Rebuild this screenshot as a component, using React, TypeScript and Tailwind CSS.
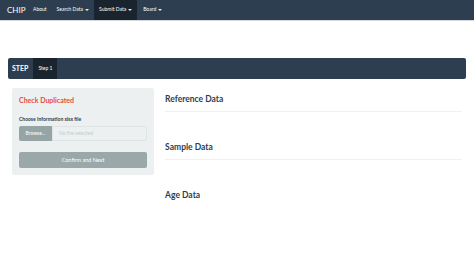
import React from 'react';

const Caret = () => (
  <span className="inline-block ml-[2px] align-middle border-t-[2px] border-x-[2px] border-x-transparent border-t-white/90 w-0 h-0" />
);

export default function App() {
  const sections = ['Reference Data', 'Sample Data', 'Age Data'];

  return (
    <div className="w-[474px] h-[270px] bg-white overflow-hidden" style={{ fontFamily: 'Lato, "Open Sans", sans-serif' }}>
      {/* top navbar */}
      <nav className="h-[21px] bg-[#2c3e50] flex items-stretch text-white border-b border-[#d5d9dc]">
        <div className="pl-[7px] pr-[5px] w-[28px] flex items-center text-[8px] leading-none">CHIP</div>
        <div className="px-[5px] flex items-center text-[5px]">About</div>
        <div className="px-[5px] flex items-center text-[5px]">Search Data<Caret /></div>
        <div className="px-[5px] flex items-center text-[5px] bg-[#1a242f]">Submit Data<Caret /></div>
        <div className="px-[6px] flex items-center text-[5px]">Board<Caret /></div>
      </nav>

      {/* step bar */}
      <div className="mt-[37px] mx-[8px] h-[21px] bg-[#2c3e50] rounded-[2px] flex items-stretch text-white">
        <div className="pl-[4px] pr-[5px] flex items-center text-[7px] font-bold">STEP</div>
        <div className="px-[5px] flex items-center text-[5px] bg-[#1a242f]">Step 1</div>
      </div>

      <div className="flex mt-[9px] px-[12px]">
        {/* left well */}
        <div className="w-[143px] h-[87px] bg-[#ecf0f1] rounded-[2px] px-[7px] pt-[9px]">
          <div className="text-[7px] font-bold text-[#e74c3c] leading-none">Check Duplicated</div>
          <div className="mt-[13px] text-[5px] font-bold text-[#2c3e50] leading-none">Choose Information xlsx file</div>
          <div className="mt-[4px] flex h-[15px]">
            <div className="w-[33px] bg-[#95a5a6] text-white text-[5px] flex items-center justify-center rounded-l-[2px]">Browse...</div>
            <div className="flex-1 bg-[#ecf0f1] border border-[#dfe4e5] text-[5px] text-[#c4cccd] flex items-center pl-[6px] rounded-r-[2px]">No file selected</div>
          </div>
          <div className="mt-[11px] h-[16px] bg-[#9aa8a9] rounded-[2px] text-white text-[5.5px] flex items-center justify-center">Confirm and Next</div>
        </div>

        {/* right column */}
        <div className="ml-[11px] w-[299px] pt-[7px]">
          {sections.map((s) => (
            <div key={s} className="h-[48px]">
              <div className="text-[8.5px] font-bold text-[#2c3e50] leading-none">{s}</div>
              {s !== 'Age Data' && <div className="mt-[7px] border-t border-[#eef0f1]" />}
            </div>
          ))}
        </div>
      </div>
    </div>
  );
}
